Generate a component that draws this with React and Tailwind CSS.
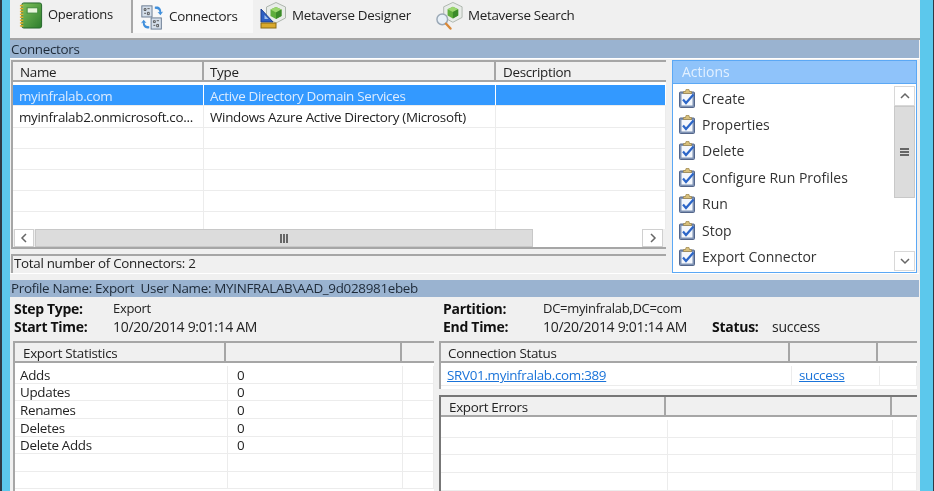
import React from "react";

const Notebook = () => (
  <svg width="24" height="27" viewBox="0 0 24 28" className="shrink-0">
    <defs>
      <linearGradient id="nb" x1="0" x2="1" y1="0" y2="1"><stop offset="0" stopColor="#7fc05a" /><stop offset="1" stopColor="#2c7d2c" /></linearGradient>
    </defs>
    <rect x="2.5" y="1" width="20.5" height="26" rx="2" fill="url(#nb)" stroke="#23662a" />
    <rect x="8" y="6" width="11" height="5.5" fill="#e9f5dc" stroke="#3f8a3a" />
    {[4, 7, 10, 13, 16, 19, 22, 25].map((y) => <rect key={y} x="0.5" y={y - 1} width="3.5" height="1.6" fill="#e0b030" />)}
  </svg>
);

const Connect = () => (
  <svg width="25" height="26" viewBox="0 0 25 28" className="shrink-0">
    <rect x="1" y="2" width="11" height="12" fill="#d5dfea" stroke="#66788f" />
    <rect x="11" y="15" width="11" height="12" fill="#d5dfea" stroke="#66788f" />
    <path d="M3.5 5h2v2h-2zM7 5h2.5M3.5 10h2M7 9h2v2.5H7zM13.5 18h2v2h-2zM17 18h2.5M13.5 23h2M17 22h2v2.500h-2z" fill="none" stroke="#444" strokeWidth="0.9" />
    <path d="M15 3c4-1 7 1 7 6l2-1-3 4-3-3.500 2 .5c0-3-2-4-5-4z" fill="#3f8fdc" />
    <path d="M9 26c-4 1-7-1-7-6l-2 1 3-4 3 3.500-2-.5c0 3 2 4 5 4z" fill="#3f8fdc" />
  </svg>
);

const Cube = () => (
  <g>
    <path d="M11 0.500 20.500 5v11L11 21 1.500 16V5z" fill="#e8ece8" stroke="#aeb6ae" />
    <path d="M11 5 16.500 7.500v6.500L11 17 5.500 14V7.500z" fill="#5fae3c" />
    <path d="M11 10.500 16.500 7.500 11 5 5.500 7.500z" fill="#9bd66e" />
    <path d="M11 10.500V17l5.500-3V7.500z" fill="#3b8a2a" />
  </g>
);

const Designer = () => (
  <svg width="27" height="28" viewBox="0 0 27 28" className="shrink-0">
    <g transform="translate(5 1)"><Cube /></g>
    <path d="M1 21V8L13 21z" fill="#2c5fc4" stroke="#1c3f90" />
    <path d="M4.500 18v-4l4 4z" fill="#9fc0ee" />
    <rect x="1" y="22" width="15" height="5" fill="#d9a92d" stroke="#8a6a14" />
  </svg>
);

const SearchIco = () => (
  <svg width="29" height="29" viewBox="0 0 29 30" className="shrink-0">
    <g transform="translate(7 1)"><Cube /></g>
    <circle cx="7" cy="19" r="5.500" fill="#e8f0f8" stroke="#9aa8b6" strokeWidth="1.500" />
    <path d="M11 23.500 15.500 28.500" stroke="#d9893a" strokeWidth="2.500" strokeLinecap="round" />
  </svg>
);

const Clip = () => (
  <svg width="17" height="19" viewBox="0 0 17 19" className="shrink-0">
    <rect x="0.500" y="3" width="15" height="15.500" rx="1" fill="#7f93b5" stroke="#54668a" />
    <rect x="2.500" y="5" width="11" height="11.500" fill="#f4f7fc" />
    <path d="M4.500 3.500V2.500h2l.5-2h3l.5 2h2v2h-8z" fill="#d8c07c" stroke="#9c8448" strokeWidth="0.700" />
    <path d="M4 10.500 7 14 14.500 5.500" fill="none" stroke="#2c66c8" strokeWidth="2.200" />
  </svg>
);

const Tool = ({ icon, label, active, w, gap, labelCls = "text-[13.4px]" }) => (
  <div className={active
    ? "flex items-center h-[33px] w-[122px] bg-[#f8f8f8] border-l-2 border-[#a8a8a8] pl-[7px] gap-[4px] shrink-0 mr-[7px]"
    : `flex items-center h-[30px] ${w} ${gap} shrink-0`}>
    {icon}
    <span className={`${labelCls} text-[#222]`}>{label}</span>
  </div>
);

const HeaderCell = ({ w, children, last, pad = "pl-[7px]", pt = "pt-[2px]" }) => (
  <div className={`${w} h-full flex items-center ${pad} ${pt} text-[13.4px] text-[#222] bg-[#f0f0f0] shrink-0 ${last ? "flex-1" : "border-r-2 border-[#a6a6a6]"}`}>{children}</div>
);

const Row = ({ cols, h, sel, cellPad = "pl-[6px]", pt = "" }) => (
  <div className={`flex ${h} shrink-0 border-b border-[#ececec] ${sel ? "bg-[#3399ff]" : "bg-white"}`}>
    {cols.map((c, i) => (
      <div key={i} className={`${c.w} ${cellPad} ${pt} flex items-center text-[13.4px] whitespace-nowrap overflow-hidden ${sel ? "text-[#dcecff] border-r border-white" : "text-[#222] border-r border-[#ececec]"} ${c.cls || ""}`}>{c.t}</div>
    ))}
  </div>
);

const Chevron = ({ d }) => (
  <svg width="12" height="12" viewBox="0 0 12 12"><path d={d} fill="none" stroke="#666" strokeWidth="1.500" /></svg>
);

const Grip = ({ vertical }) => (
  <div className={`flex ${vertical ? "flex-col w-[9px]" : "h-[9px]"} gap-[1.500px]`}>
    {[0, 1, 2].map((i) => <div key={i} className={vertical ? "h-[1.500px] bg-[#666]" : "w-[1.500px] h-[9px] bg-[#666]"} />)}
  </div>
);

const Section = ({ children, h, pb = "" }) => (
  <div className={`${h} ${pb} bg-[#9ab3d0] text-[13.4px] text-[#1e2a38] flex items-center pl-[1px] shrink-0 whitespace-nowrap`}>{children}</div>
);

const actions = ["Create", "Properties", "Delete", "Configure Run Profiles", "Run", "Stop", "Export Connector"];

const c1 = ["w-[191px]", "w-[292px]", "flex-1"];
const statHead = ["w-[211px]", "w-[176px]", "flex-1"];
const statCols = ["w-[213px]", "w-[175px]", "flex-1"];
const errCols = ["w-[225px]", "w-[226px]", "flex-1"];

const Label = ({ w, children }) => <span className={`${w} font-bold text-[14px] text-[#111] inline-block shrink-0`}>{children}</span>;
const Val = ({ children, cls = "text-[14px]" }) => <span className={`text-[#222] ${cls}`}>{children}</span>;

export default function App() {
  return (
    <div className="w-[934px] h-[491px] overflow-hidden flex bg-[#2f3a45] [font-family:'Open_Sans',sans-serif] tracking-[-0.3px] blur-[0.35px]">
      <div className="w-[2px] bg-[#2f3a45]" />
      <div className="w-[8px] bg-[#5cc8ec]" />
      <div className="w-[910px] bg-[#f0f0f0] flex flex-col">
        <div className="h-[40px] flex items-start pl-[9px] border-b-2 border-[#a4a4a4] shrink-0">
          <Tool icon={<Notebook />} label="Operations" w="w-[112px]" gap="gap-[5px]" labelCls="text-[13px]" />
          <Tool icon={<Connect />} label="Connectors" active />
          <Tool icon={<Designer />} label="Metaverse Designer" w="w-[175px]" gap="gap-[5px]" />
          <Tool icon={<SearchIco />} label="Metaverse Search" w="w-[160px]" gap="gap-[4px]" />
        </div>
        <div className="w-[909px]"><Section h="h-[18px]">Connectors</Section></div>
        <div className="flex h-[215px] pt-[1px] pl-[1px] shrink-0 border-t border-white">
          <div className="w-[655px] flex flex-col shrink-0">
            <div className="h-[169px] shrink-0 overflow-hidden flex flex-col border-t-2 border-l-2 border-[#a6a6a6] bg-white">
              <div className="flex h-[20px] shrink-0 border-b-2 border-[#a6a6a6]">
                <HeaderCell w={c1[0]}>Name</HeaderCell>
                <HeaderCell w={c1[1]} pad="pl-[6px]">Type</HeaderCell>
                <HeaderCell w={c1[2]} last>Description</HeaderCell>
              </div>
              <div className="h-[3px] shrink-0 bg-white" />
              <Row sel pt="pt-[2px]" h="h-[21px]" cols={[{ w: c1[0], t: "myinfralab.com" }, { w: c1[1], t: "Active Directory Domain Services" }, { w: c1[2], t: "" }]} />
              <Row pt="pt-[2px]" h="h-[22px]" cols={[{ w: c1[0], t: "myinfralab2.onmicrosoft.co..." }, { w: c1[1], t: "Windows Azure Active Directory (Microsoft)" }, { w: c1[2], t: "" }]} />
              {[0, 1, 2, 3, 4].map((i) => <Row key={i} h="h-[21px]" cols={[{ w: c1[0], t: "" }, { w: c1[1], t: "" }, { w: c1[2], t: "" }]} />)}
            </div>
            <div className="flex h-[20px] shrink-0 items-stretch border-l-2 border-[#a6a6a6] border-b-2 pl-[1px] pr-[3px] bg-[#f0f0f0]">
              <div className="w-[20px] bg-white border border-[#d0d0d0] flex items-center justify-center"><Chevron d="M8 2 4 6l4 4" /></div>
              <div className="flex-none w-[498px] ml-[1px] bg-[#dcdcdc] border border-[#c8c8c8] flex items-center justify-center"><Grip /></div>
              <div className="w-[110px] bg-white" />
              <div className="w-[21px] bg-white border border-[#d0d0d0] flex items-center justify-center"><Chevron d="M4 2l4 4-4 4" /></div>
            </div>
            <div className="h-[19px] shrink-0 mt-[5px] border-t-2 border-l-2 border-[#a6a6a6] text-[13.4px] text-[#222] flex items-center pl-[1px] pb-[2px] bg-[#f0f0f0]">Total number of Connectors: 2</div>
          </div>
          <div className="w-[245px] ml-[6px] flex flex-col border border-[#5ba8f5] h-[213px] shrink-0">
            <div className="h-[23px] bg-[#8fc3fa] border-b border-[#5ba8f5] text-[14px] text-[#e2f0ff] flex items-center pl-[9px] pb-[2px] shrink-0 tracking-normal">Actions</div>
            <div className="flex-1 flex bg-white min-h-0">
              <div className="flex-1 pl-[6px] pt-[1px] flex flex-col">
                {actions.map((a) => (
                  <div key={a} className="h-[26.400px] flex items-center gap-[6px] text-[14px] text-[#333] tracking-normal whitespace-nowrap shrink-0"><Clip />{a}</div>
                ))}
              </div>
              <div className="w-[21px] flex flex-col shrink-0 mr-[1px] mt-[2px] mb-[1px]">
                <div className="h-[20px] bg-white border border-[#d8d8d8] flex items-center justify-center shrink-0"><Chevron d="M2 8l4-4 4 4" /></div>
                <div className="h-[92px] bg-[#dcdcdc] border border-[#c8c8c8] flex items-center justify-center shrink-0"><Grip vertical /></div>
                <div className="flex-1 bg-white" />
                <div className="h-[20px] bg-white border border-[#d8d8d8] flex items-center justify-center shrink-0"><Chevron d="M2 4l4 4 4-4" /></div>
              </div>
            </div>
          </div>
        </div>
        <div className="h-[1px] bg-white shrink-0 w-[909px]" />
        <div className="h-[6px] shrink-0" />
        <div className="w-[909px]"><Section h="h-[17px]" pb="pb-[1px]">Profile Name: Export&nbsp; User Name: MYINFRALAB\AAD_9d028981ebeb</Section></div>
        <div className="h-[44px] flex pt-[3px] shrink-0">
          <div className="w-[433px] pl-[4px] flex flex-col shrink-0">
            <div className="h-[17.500px] flex items-center"><Label w="w-[99px]">Step Type:</Label><Val cls="text-[13px]">Export</Val></div>
            <div className="h-[17.500px] flex items-center"><Label w="w-[99px]">Start Time:</Label><Val>10/20/2014 9:01:14 AM</Val></div>
          </div>
          <div className="flex-1 flex flex-col">
            <div className="h-[17.500px] flex items-center"><Label w="w-[100px]">Partition:</Label><Val cls="text-[13px]">DC=myinfralab,DC=com</Val></div>
            <div className="h-[17.500px] flex items-center"><Label w="w-[100px]">End Time:</Label><Val>10/20/2014 9:01:14 AM</Val><Label w="w-[60px] ml-[25px]">Status:</Label><Val>success</Val></div>
          </div>
        </div>
        <div className="flex-1 flex min-h-0 pl-[3px]">
          <div className="w-[421px] border-t-2 border-l-2 border-[#a6a6a6] bg-white flex flex-col shrink-0 overflow-hidden h-[150px]">
            <div className="flex h-[20px] shrink-0 border-b-2 border-[#a6a6a6]">
              <HeaderCell w={statHead[0]} pad="pl-[8px]">Export Statistics</HeaderCell>
              <HeaderCell w={statHead[1]} pad="">{""}</HeaderCell>
              <HeaderCell w={statHead[2]} last>{""}</HeaderCell>
            </div>
            <div className="h-[3px] shrink-0" />
            {[["Adds", "0"], ["Updates", "0"], ["Renames", "0"], ["Deletes", "0"], ["Delete Adds", "0"], ["", ""], ["", ""]].map(([a, b], i) => (
              <Row key={i} h="h-[17.650px]" pt="pt-[1px]" cellPad="pl-[5px]" cols={[{ w: statCols[0], t: a }, { w: statCols[1], t: b, cls: "pl-[9px]" }, { w: statCols[2], t: "" }]} />
            ))}
          </div>
          <div className="ml-[5px] w-[478px] flex flex-col shrink-0">
            <div className="h-[48px] border-t-2 border-l-2 border-[#a6a6a6] bg-white flex flex-col shrink-0 overflow-hidden">
              <div className="flex h-[20px] shrink-0 border-b-2 border-[#a6a6a6]">
                <HeaderCell w="w-[349px]">Connection Status</HeaderCell>
                <HeaderCell w="w-[88px]">{""}</HeaderCell>
                <HeaderCell w="flex-1" last>{""}</HeaderCell>
              </div>
              <div className="h-[3px] shrink-0" />
              <Row h="h-[20px]" cols={[
                { w: "w-[351px]", t: <span className="underline text-[#1a73d9]">SRV01.myinfralab.com:389</span> },
                { w: "w-[88px]", t: <span className="underline text-[#1a73d9] ml-[1px]">success</span> },
                { w: "flex-1", t: "" },
              ]} />
            </div>
            <div className="mt-[6px] h-[96px] border-t-2 border-l-2 border-[#777] bg-white flex flex-col shrink-0 overflow-hidden">
              <div className="flex h-[20px] shrink-0 border-b-2 border-[#a6a6a6]">
                <HeaderCell w={errCols[0]} pad="pl-[8px]">Export Errors</HeaderCell>
                <HeaderCell w={errCols[1]}>{""}</HeaderCell>
                <HeaderCell w={errCols[2]} last>{""}</HeaderCell>
              </div>
              <div className="h-[3px] shrink-0" />
              {[0, 1, 2, 3].map((i) => <Row key={i} h="h-[17.650px]" cols={[{ w: "w-[227px]", t: "" }, { w: "w-[225px]", t: "" }, { w: "flex-1", t: "" }]} />)}
            </div>
          </div>
        </div>
      </div>
      <div className="w-[13px] bg-[#5cc8ec]" />
      <div className="w-[1px] bg-[#2f3a45]" />
    </div>
  );
}
